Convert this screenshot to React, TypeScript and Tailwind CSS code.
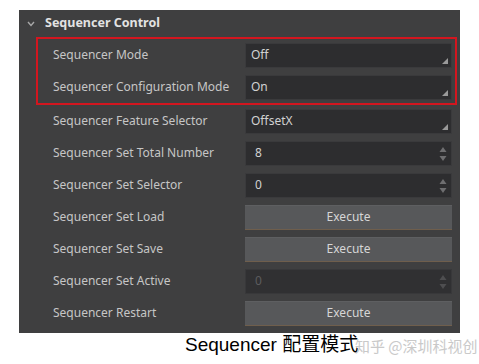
import { ReactNode } from "react";

const font = { fontFamily: '"Noto Sans", "Open Sans", sans-serif' };

function DropCorner() {
  return (
    <svg width="6" height="6" viewBox="0 0 6 6" className="absolute right-[3px] bottom-[3px]">
      <polygon points="6,0 6,6 0,6" fill="#9a9a9a" />
    </svg>
  );
}

function Spin({ dim }: { dim?: boolean }) {
  const c = dim ? "#4e4e50" : "#6e6e70";
  return (
    <svg width="8" height="16" viewBox="0 0 8 16" className="absolute right-[4px] top-[4px]">
      <polygon points="4,1 7.5,6 0.5,6" fill={c} />
      <polygon points="0.5,10 7.5,10 4,15" fill={c} />
    </svg>
  );
}

function Field({ value, kind, dim }: { value: string; kind: "enum" | "int"; dim?: boolean }) {
  return (
    <div
      className={
        dim
          ? "relative h-[25px] w-[207px] bg-[#303032] border border-[#38383a] flex items-center pl-[9px] text-[#5c5c5e]"
          : "relative h-[25px] w-[207px] bg-[#2d2d2f] border border-[#3a3a3c] flex items-center pl-[5px] text-[#d2d2d2]"
      }
    >
      {kind === "int" && !dim ? <span className="pl-[4px]">{value}</span> : <span>{value}</span>}
      {kind === "enum" ? <DropCorner /> : <Spin dim={dim} />}
    </div>
  );
}

function ExecBtn() {
  return (
    <div className="h-[25px] w-[207px] bg-[#57585a] border-b border-[#6f5e4c] border-t border-t-[#5e5f61] flex items-center justify-center text-[#d6d6d6]">
      Execute
    </div>
  );
}

function Row({ label, inBox, children }: { label: string; inBox?: boolean; children: ReactNode }) {
  return (
    <div className="flex items-center h-[32px]">
      <div className={inBox ? "w-[207px] pl-[15px] text-[#c6c6c6]" : "w-[209px] pl-[17px] text-[#c6c6c6]"}>{label}</div>
      {children}
    </div>
  );
}

export default function App() {
  return (
    <div className="relative w-[479px] h-[364px] bg-white overflow-hidden">
      <div className="ml-[19px] mt-[10px] w-[441px] bg-[#3f3f40] text-[12px] pb-[4px]" style={font}>
        {/* header */}
        <div className="h-[27px] flex items-center">
          <svg width="8" height="6" viewBox="0 0 8 6" className="ml-[8px] mt-[1px]">
            <polyline points="1,1 4,4.5 7,1" fill="none" stroke="#a8a8a8" strokeWidth="1.4" />
          </svg>
          <span className="ml-[10px] font-bold text-[12.5px] text-[#e2e2e2]">Sequencer Control</span>
        </div>

        <div className="ml-[17px] w-[421px]">
          {/* highlighted rows */}
          <div className="border-[2.5px] border-[#d3161f]">
            <Row label="Sequencer Mode" inBox>
              <Field value="Off" kind="enum" />
            </Row>
            <Row label="Sequencer Configuration Mode" inBox>
              <Field value="On" kind="enum" />
            </Row>
          </div>

          <Row label="Sequencer Feature Selector">
            <Field value="OffsetX" kind="enum" />
          </Row>
          <Row label="Sequencer Set Total Number">
            <Field value="8" kind="int" />
          </Row>
          <Row label="Sequencer Set Selector">
            <Field value="0" kind="int" />
          </Row>
          <Row label="Sequencer Set Load">
            <ExecBtn />
          </Row>
          <Row label="Sequencer Set Save">
            <ExecBtn />
          </Row>
          <Row label="Sequencer Set Active">
            <Field value="0" kind="int" dim />
          </Row>
          <Row label="Sequencer Restart">
            <ExecBtn />
          </Row>
        </div>
      </div>

      {/* caption */}
      <div
        className="pl-[185px] pt-[1px] text-[19px] leading-[22px] text-black"
        style={{ fontFamily: '"Liberation Sans", "Noto Sans CJK SC", sans-serif' }}
      >
        Sequencer 配置模式
      </div>

      {/* watermark */}
      <div
        className="absolute left-[355px] top-[336px] whitespace-nowrap text-[15px] leading-[20px] text-[#c4c4c4] opacity-90"
        style={{ fontFamily: '"Noto Sans CJK SC", sans-serif' }}
      >
        知乎 @深圳科视创
      </div>
    </div>
  );
}
